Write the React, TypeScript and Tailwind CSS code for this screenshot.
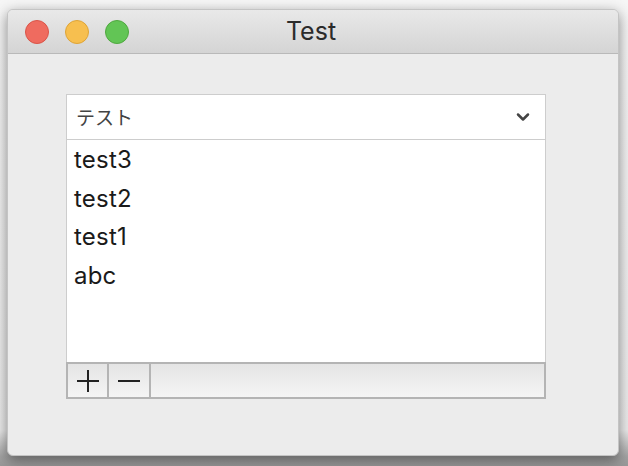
import { ChevronDown } from 'lucide-react'

const items = ['test3', 'test2', 'test1', 'abc']

function TrafficLight({ fill, ring }: { fill: string; ring: string }) {
  return <span className={`h-[24px] w-[24px] rounded-full border ${fill} ${ring}`} />
}

export default function App() {
  return (
    <div className="h-[466px] w-[628px] overflow-hidden bg-[linear-gradient(to_bottom,#f6f6f6_0px,#ececec_430px,#a2a2a2_457px,#989898_466px)] pl-[7px] pt-[9px] font-['Inter',sans-serif]">
      <div className="flex h-[447px] w-[612px] flex-col overflow-hidden rounded-[6px] border border-[#c4c4c4] bg-[#ececec] shadow-[0_4px_14px_rgba(0,0,0,0.45)]">
        {/* title bar */}
        <div className="relative flex h-[44px] shrink-0 items-center border-b border-[#b9b9b9] bg-[linear-gradient(to_bottom,#e9e9e9,#d4d4d4)] pl-[17px]">
          <div className="flex gap-[16px]">
            <TrafficLight fill="bg-[#ef6b5f]" ring="border-[#da5448]" />
            <TrafficLight fill="bg-[#f7bf4f]" ring="border-[#dea437]" />
            <TrafficLight fill="bg-[#62c555]" ring="border-[#4fa83f]" />
          </div>
          <div className="absolute inset-0 flex items-center justify-center pr-[4px] text-[25px] text-[#2b2b2b]">
            Test
          </div>
        </div>

        {/* content */}
        <div className="pl-[58px] pt-[40px]">
          <div className="flex w-[480px] flex-col">
            <div className="flex h-[46px] items-center justify-between border border-[#cdcdcd] bg-white pl-[9px] pr-[12px]">
              <span className="font-['Noto_Sans_CJK_JP',sans-serif] text-[19px] text-[#434343]">テスト</span>
              <ChevronDown className="h-[20px] w-[20px] text-[#444]" strokeWidth={3} />
            </div>
            <div className="flex h-[222px] flex-col border-x border-[#cdcdcd] bg-white pl-[7px] pt-[1px]">
              {items.map((item) => (
                <div key={item} className="flex h-[38.5px] items-center text-[24px] tracking-[0.2px] text-[#1a1a1a]">
                  {item}
                </div>
              ))}
            </div>
            <div className="flex h-[37px] border-2 border-[#b4b4b4] bg-[linear-gradient(to_bottom,#e4e4e4,#f5f5f5)]">
              <div className="flex w-[41px] items-center justify-center border-r-2 border-[#b4b4b4]">
                <svg width="24" height="24" viewBox="0 0 24 24" className="text-[#222]">
                  <path d="M12 1v22M1 12h22" stroke="currentColor" strokeWidth="2" />
                </svg>
              </div>
              <div className="flex w-[42px] items-center justify-center border-r-2 border-[#b4b4b4]">
                <svg width="24" height="24" viewBox="0 0 24 24" className="text-[#222]">
                  <path d="M1 12h22" stroke="currentColor" strokeWidth="2" />
                </svg>
              </div>
              <div className="flex-1" />
            </div>
          </div>
        </div>
      </div>
    </div>
  )
}
